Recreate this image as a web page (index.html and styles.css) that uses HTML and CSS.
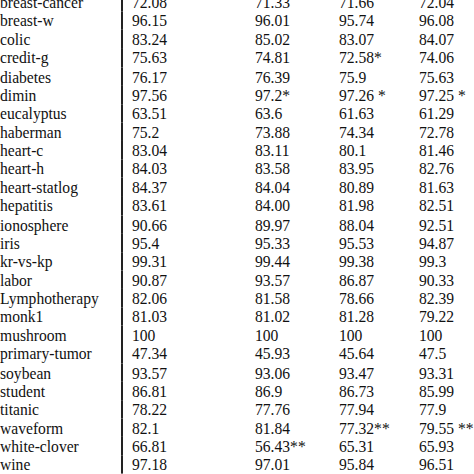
FILE: index.html
```html
<!DOCTYPE html>
<html>
<head>
<meta charset="utf-8">
<link rel="stylesheet" href="styles.css">
</head>
<body>
<div class="table">
  <div class="row"><div class="c1">breast-cancer</div><div class="c2">72.08</div><div class="c3">71.33</div><div class="c4">71.66</div><div class="c5">72.04</div></div>
  <div class="row"><div class="c1">breast-w</div><div class="c2">96.15</div><div class="c3">96.01</div><div class="c4">95.74</div><div class="c5">96.08</div></div>
  <div class="row"><div class="c1">colic</div><div class="c2">83.24</div><div class="c3">85.02</div><div class="c4">83.07</div><div class="c5">84.07</div></div>
  <div class="row"><div class="c1">credit-g</div><div class="c2">75.63</div><div class="c3">74.81</div><div class="c4">72.58*</div><div class="c5">74.06</div></div>
  <div class="row"><div class="c1">diabetes</div><div class="c2">76.17</div><div class="c3">76.39</div><div class="c4">75.9</div><div class="c5">75.63</div></div>
  <div class="row"><div class="c1">dimin</div><div class="c2">97.56</div><div class="c3">97.2*</div><div class="c4">97.26 *</div><div class="c5">97.25 *</div></div>
  <div class="row"><div class="c1">eucalyptus</div><div class="c2">63.51</div><div class="c3">63.6</div><div class="c4">61.63</div><div class="c5">61.29</div></div>
  <div class="row"><div class="c1">haberman</div><div class="c2">75.2</div><div class="c3">73.88</div><div class="c4">74.34</div><div class="c5">72.78</div></div>
  <div class="row"><div class="c1">heart-c</div><div class="c2">83.04</div><div class="c3">83.11</div><div class="c4">80.1</div><div class="c5">81.46</div></div>
  <div class="row"><div class="c1">heart-h</div><div class="c2">84.03</div><div class="c3">83.58</div><div class="c4">83.95</div><div class="c5">82.76</div></div>
  <div class="row"><div class="c1">heart-statlog</div><div class="c2">84.37</div><div class="c3">84.04</div><div class="c4">80.89</div><div class="c5">81.63</div></div>
  <div class="row"><div class="c1">hepatitis</div><div class="c2">83.61</div><div class="c3">84.00</div><div class="c4">81.98</div><div class="c5">82.51</div></div>
  <div class="row"><div class="c1">ionosphere</div><div class="c2">90.66</div><div class="c3">89.97</div><div class="c4">88.04</div><div class="c5">92.51</div></div>
  <div class="row"><div class="c1">iris</div><div class="c2">95.4</div><div class="c3">95.33</div><div class="c4">95.53</div><div class="c5">94.87</div></div>
  <div class="row"><div class="c1">kr-vs-kp</div><div class="c2">99.31</div><div class="c3">99.44</div><div class="c4">99.38</div><div class="c5">99.3</div></div>
  <div class="row"><div class="c1">labor</div><div class="c2">90.87</div><div class="c3">93.57</div><div class="c4">86.87</div><div class="c5">90.33</div></div>
  <div class="row"><div class="c1">Lymphotherapy</div><div class="c2">82.06</div><div class="c3">81.58</div><div class="c4">78.66</div><div class="c5">82.39</div></div>
  <div class="row"><div class="c1">monk1</div><div class="c2">81.03</div><div class="c3">81.02</div><div class="c4">81.28</div><div class="c5">79.22</div></div>
  <div class="row"><div class="c1">mushroom</div><div class="c2">100</div><div class="c3">100</div><div class="c4">100</div><div class="c5">100</div></div>
  <div class="row"><div class="c1">primary-tumor</div><div class="c2">47.34</div><div class="c3">45.93</div><div class="c4">45.64</div><div class="c5">47.5</div></div>
  <div class="row"><div class="c1">soybean</div><div class="c2">93.57</div><div class="c3">93.06</div><div class="c4">93.47</div><div class="c5">93.31</div></div>
  <div class="row"><div class="c1">student</div><div class="c2">86.81</div><div class="c3">86.9</div><div class="c4">86.73</div><div class="c5">85.99</div></div>
  <div class="row"><div class="c1">titanic</div><div class="c2">78.22</div><div class="c3">77.76</div><div class="c4">77.94</div><div class="c5">77.9</div></div>
  <div class="row"><div class="c1">waveform</div><div class="c2">82.1</div><div class="c3">81.84</div><div class="c4">77.32**</div><div class="c5">79.55 **</div></div>
  <div class="row"><div class="c1">white-clover</div><div class="c2">66.81</div><div class="c3">56.43**</div><div class="c4">65.31</div><div class="c5">65.93</div></div>
  <div class="row"><div class="c1">wine</div><div class="c2">97.18</div><div class="c3">97.01</div><div class="c4">95.84</div><div class="c5">96.51</div></div>
</div>
</body>
</html>
```

FILE: styles.css
```css
html, body {
  margin: 0;
  padding: 0;
  background: #ffffff;
  overflow: hidden;
}
body {
  width: 474px;
  height: 474px;
}
.table {
  margin-top: -6.7px;
  font-family: "Liberation Serif", "Times New Roman", serif;
  font-size: 15.6px;
  line-height: 17.13px;
  color: #111111;
  transform: scaleY(1.08);
  transform-origin: 0 0;
}
.row {
  display: flex;
  white-space: nowrap;
}
.c1 {
  width: 121px;
  flex: none;
}
.c2 {
  flex: none;
  border-left: 2px solid #222;
  padding-left: 9px;
  box-sizing: border-box;
  width: 134px;
}
.c3 {
  width: 84px;
  flex: none;
}
.c4 {
  width: 80px;
  flex: none;
}
.c5 {
  flex: 1;
}
```
